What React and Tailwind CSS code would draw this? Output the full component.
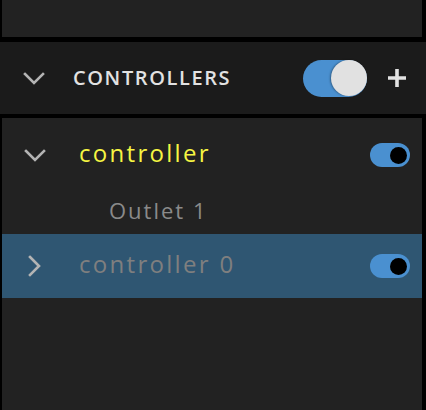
import React, { useState } from 'react';

const font = { fontFamily: '"Open Sans", "Liberation Sans", sans-serif' };

const ChevronDown = ({ className }) => (
  <svg viewBox="0 0 22 13" className={className} fill="none" stroke="currentColor" strokeWidth="2.6" strokeLinecap="square">
    <path d="M2 2 L11 11 L20 2" />
  </svg>
);

const ChevronRight = ({ className }) => (
  <svg viewBox="0 0 14 22" className={className} fill="none" stroke="currentColor" strokeWidth="2.6" strokeLinecap="square">
    <path d="M2 2 L11 11 L2 20" />
  </svg>
);

const SmallToggle = ({ on }) => (
  <div className={`w-[40px] h-[24px] rounded-full flex items-center px-[3px] ${on ? 'bg-[#4a90d0] justify-end' : 'bg-[#555] justify-start'}`}>
    <div className="w-[17px] h-[17px] rounded-full bg-black" />
  </div>
);

const ControllerRow = ({ name, expanded, selected, active, on }) => (
  <div className={`flex items-center h-[64px] pl-[21px] pr-[12px] ${selected ? 'bg-[#2f5672]' : ''}`}>
    <div className="w-[24px] flex justify-center text-[#b4b4b4]">
      {expanded ? <ChevronDown className="w-[22px] h-[13px]" /> : <ChevronRight className="w-[14px] h-[22px]" />}
    </div>
    <span
      className={`ml-[32px] mb-[5px] text-[24px] font-medium tracking-[2.3px] flex-1 ${active ? 'text-[#f5f542]' : 'text-[#7f7f7f]'}`}
      style={font}
    >
      {name}
    </span>
    <SmallToggle on={on} />
  </div>
);

export default function App() {
  const [allOn, setAllOn] = useState(true);

  return (
    <div className="w-[426px] h-[410px] bg-black flex flex-col overflow-hidden" style={font}>
      {/* panel above */}
      <div className="ml-[2px] w-[420px] h-[37px] bg-[#222222] shrink-0" />

      {/* section header */}
      <div className="mt-[5px] h-[72px] bg-[#1b1b1b] flex items-center pl-[23px] pr-[20px] shrink-0">
        <ChevronDown className="w-[22px] h-[13px] text-[#b4b4b4]" />
        <span className="ml-[28px] text-[20px] font-semibold tracking-[1.6px] text-[#e2e2e2] flex-1">CONTROLLERS</span>
        <button
          onClick={() => setAllOn(!allOn)}
          className={`w-[64px] h-[37px] rounded-full flex items-center ${allOn ? 'bg-[#4a90d0] justify-end' : 'bg-[#555] justify-start'}`}
        >
          <div className="w-[36px] h-[36px] rounded-full bg-[#e1e1e1] shadow-[-1px_0_2px_rgba(0,0,0,0.35)]" />
        </button>
        <svg viewBox="0 0 18 18" className="ml-[21px] w-[18px] h-[18px] text-[#e2e2e2]" fill="none" stroke="currentColor" strokeWidth="3.6">
          <path d="M9 0 V18 M0 9 H18" />
        </svg>
      </div>

      {/* controller list */}
      <div className="mt-[4px] ml-[2px] w-[420px] flex-1 bg-[#222222] flex flex-col">
        <div className="h-[5px]" />
        <ControllerRow name="controller" expanded active on />
        <div className="h-[47px] flex items-center pl-[107px]">
          <span className="text-[22px] tracking-[2px] text-[#8a8a8a]">Outlet 1</span>
        </div>
        <ControllerRow name="controller 0" selected on />
      </div>
    </div>
  );
}
